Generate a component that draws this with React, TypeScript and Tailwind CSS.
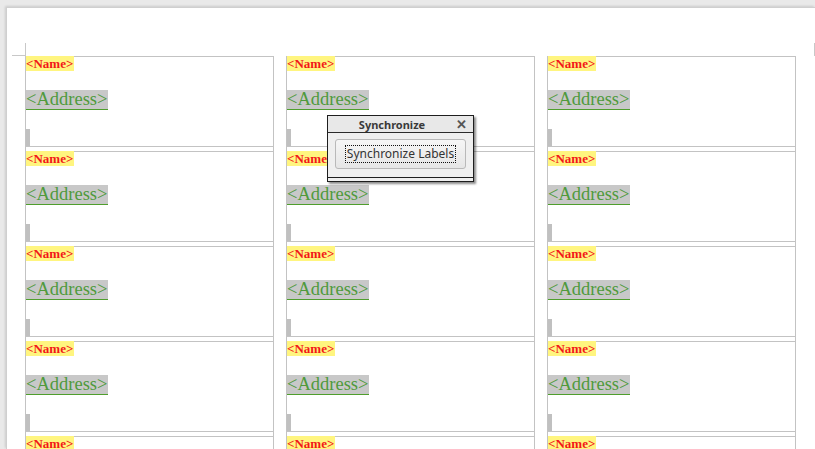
const ROWS = [0, 1, 2, 3, 4];
const COLS = [0, 1, 2];

function LabelCell() {
  return (
    <div className="flex h-[91px] shrink-0 flex-col border-y border-[#c3c3c3]">
      <div className="-mt-px flex h-[15px]">
        <span className="bg-[#fff57f] pr-[1px] text-[13px] font-bold leading-[15px] text-[#f21818]">
          &lt;Name&gt;
        </span>
      </div>
      <div className="mt-[19px] flex h-[20px]">
        <span className="border-b border-[#4f9e2d] bg-[#c8c8c8] text-[18.5px] leading-[19px] text-[#4f9a3c]">
          &lt;Address&gt;
        </span>
      </div>
      <div className="mt-auto h-[17px] w-[4px] bg-[#c0c0c0]" />
    </div>
  );
}

function LabelColumn() {
  return (
    <div className="flex w-[249px] flex-col gap-[4px] border-x border-[#c3c3c3]">
      {ROWS.map((r) => (
        <LabelCell key={r} />
      ))}
    </div>
  );
}

function SyncDialog() {
  return (
    <div className="absolute left-[327px] top-[115px] w-[147px] border border-[#1e1e1e] bg-[#efefef] shadow-[2px_2px_2px_rgba(0,0,0,0.45)] font-['Noto_Sans',sans-serif]">
      <div className="flex h-[17px] items-center border-b border-[#2b2b2b] bg-[#e8e8e8] px-[6px]">
        <span className="flex-1 pr-[6px] text-center text-[11px] font-bold leading-none text-[#3a3a3a]">
          Synchronize
        </span>
        <span className="text-[13px] font-bold leading-none text-[#555]">✕</span>
      </div>
      <div className="px-[7px] pb-[8px] pt-[6px]">
        <div className="flex h-[30px] items-center justify-center rounded-[3px] border border-[#b9b9b9] bg-gradient-to-b from-[#f6f6f6] to-[#e6e6e6]">
          <span className="border border-dotted border-[#111] px-[1px] text-[12px] leading-[16px] text-[#333]">
            Synchronize Labels
          </span>
        </div>
      </div>
      <div className="h-[4px] border-t border-[#1e1e1e] bg-[#efefef]" />
    </div>
  );
}

export default function App() {
  return (
    <div className="relative h-[449px] w-[815px] overflow-hidden bg-[#e9e9e9] pl-[6px] pt-[7px] font-['Liberation_Serif',serif]">
      <div className="relative h-full w-full border-l border-t border-[#cfcfcf] bg-white pl-[18px] pt-[48px] shadow-[-1px_-1px_2px_rgba(0,0,0,0.12)]">
        {/* page corner marks */}
        <div className="absolute left-[18px] top-[35px] h-[13px] w-px bg-[#c8c8c8]" />
        <div className="absolute left-[5px] top-[47px] h-px w-[13px] bg-[#c8c8c8]" />
        <div className="absolute left-[807px] top-[35px] h-[13px] w-px bg-[#c8c8c8]" />

        <div className="flex gap-[12px]">
          {COLS.map((c) => (
            <LabelColumn key={c} />
          ))}
        </div>
      </div>
      <SyncDialog />
    </div>
  );
}
